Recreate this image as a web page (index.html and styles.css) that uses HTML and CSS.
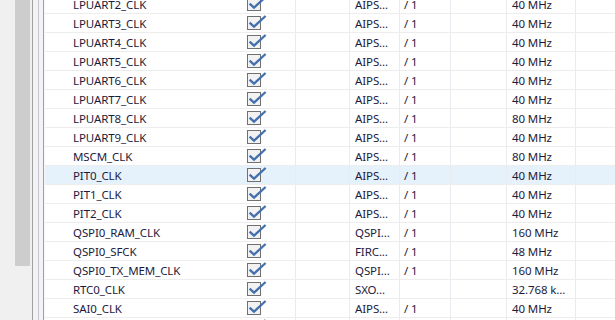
FILE: index.html
```html
<!DOCTYPE html>
<html>
<head>
<meta charset="utf-8">
<link rel="stylesheet" href="styles.css">
</head>
<body>
<div class="view">
  <div class="gutter">
    <div class="track"><div class="thumb"></div></div>
    <div class="g-space2"></div>
    <div class="g-line dark"></div>
    <div class="g-space5"></div>
    <div class="g-line"></div>
    <div class="g-space4"></div>
    <div class="g-line dark"></div>
    <div class="g-space1"></div>
  </div>
  <div class="table">
    <div class="rows" id="rows"></div>
  </div>
</div>
<script>
const data = [
  ["LPUART2_CLK","AIPS...","/ 1","40 MHz"],
  ["LPUART3_CLK","AIPS...","/ 1","40 MHz"],
  ["LPUART4_CLK","AIPS...","/ 1","40 MHz"],
  ["LPUART5_CLK","AIPS...","/ 1","40 MHz"],
  ["LPUART6_CLK","AIPS...","/ 1","40 MHz"],
  ["LPUART7_CLK","AIPS...","/ 1","40 MHz"],
  ["LPUART8_CLK","AIPS...","/ 1","80 MHz"],
  ["LPUART9_CLK","AIPS...","/ 1","40 MHz"],
  ["MSCM_CLK","AIPS...","/ 1","80 MHz"],
  ["PIT0_CLK","AIPS...","/ 1","40 MHz",true],
  ["PIT1_CLK","AIPS...","/ 1","40 MHz"],
  ["PIT2_CLK","AIPS...","/ 1","40 MHz"],
  ["QSPI0_RAM_CLK","QSPI...","/ 1","160 MHz"],
  ["QSPI0_SFCK","FIRC...","/ 1","48 MHz"],
  ["QSPI0_TX_MEM_CLK","QSPI...","/ 1","160 MHz"],
  ["RTC0_CLK","SXO...","","32.768 k..."],
  ["SAI0_CLK","AIPS...","/ 1","40 MHz"],
  ["SAI1_CLK","AIPS...","/ 1","40 MHz"]
];
const check = '<svg class="cb" width="20" height="16" viewBox="0 0 20 16"><rect x="0.5" y="1.5" width="13" height="13" fill="#f2f2f2" stroke="#707070"/><path d="M2.6 7.6 L7 11.6 L18.6 1" fill="none" stroke="#4470ad" stroke-width="2.3" stroke-linejoin="miter"/></svg>';
const rows = document.getElementById('rows');
rows.innerHTML = data.map(r =>
  '<div class="row' + (r[4] ? ' hl' : '') + '">' +
  '<div class="c name">' + r[0] + '</div>' +
  '<div class="c chk">' + check + '</div>' +
  '<div class="c"></div>' +
  '<div class="c src">' + r[1] + '</div>' +
  '<div class="c div">' + r[2] + '</div>' +
  '<div class="c"></div>' +
  '<div class="c freq">' + r[3] + '</div>' +
  '<div class="c last"></div>' +
  '</div>').join('');
</script>
</body>
</html>
```
FILE: styles.css
```css
html, body {
  margin: 0;
  padding: 0;
  background: #ffffff;
}
.view {
  display: flex;
  width: 615px;
  height: 320px;
  overflow: hidden;
  font-family: "Noto Sans", "Segoe UI", sans-serif;
  font-size: 11.5px;
  letter-spacing: -0.1px;
  color: #1d1b3c;
}
.gutter {
  display: flex;
  flex: 0 0 45px;
  height: 320px;
}
.track {
  width: 30px;
  background: #f0f0f0;
  display: flex;
}
.thumb {
  margin-left: 15px;
  width: 15px;
  height: 266px;
  background: #cdcdcd;
}
.g-space2 { width: 2px; background: #f0f0f0; }
.g-space5 { width: 5px; background: #f3f3f7; }
.g-space4 { width: 4px; background: #f3f3f7; }
.g-space1 { width: 1px; background: #f7f7f7; }
.g-line { width: 1px; background: #c6c6cc; }
.g-line.dark { background: #a0a0a0; }
.table {
  flex: 1;
  overflow: hidden;
}
.rows {
  margin-top: -5px;
}
.row {
  display: grid;
  grid-template-columns: 195px 56px 54px 50px 51px 56px 69px 1fr;
  height: 18px;
  border-bottom: 1px solid #ededed;
  line-height: 19px;
}
.row.hl {
  background: #e5f1fb;
}
.c {
  border-right: 1px solid #e8ebf0;
  white-space: nowrap;
  overflow: hidden;
}
.c.name {
  border-right: none;
  padding-left: 28px;
}
.c.chk {
  padding-left: 7px;
}
.cb {
  display: block;
  margin-top: 1px;
}
.c.src { padding-left: 5px; }
.c.div { padding-left: 4px; }
.c.freq { padding-left: 5px; }
.c.last { border-right: none; }
```
